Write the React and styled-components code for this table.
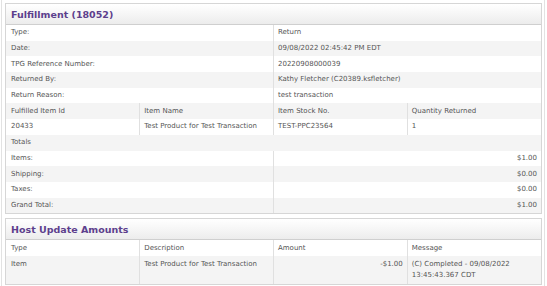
import styled, { createGlobalStyle } from 'styled-components';

const GlobalStyle = createGlobalStyle`
	html, body {
		margin: 0;
		padding: 0;
		background: #ffffff;
	}
	body {
		font-family: 'DejaVu Sans', Verdana, sans-serif;
		color: #555555;
	}
`;

const Wrapper = styled.div`
	box-sizing: border-box;
	width: 544px;
	margin-left: 1px;
	padding: 3px 2px 2px 3px;
	border: 1px solid #e2e2e2;
	border-top: none;
	display: flex;
	flex-direction: column;
	gap: 4px;
`;

const Panel = styled.section`
	border: 1px solid #d6d6d6;
	background: #ffffff;
`;

const PanelHeader = styled.h2`
	margin: 0;
	height: 20px;
	padding: 0 5px;
	display: flex;
	align-items: center;
	font-size: 9.5px;
	font-weight: bold;
	color: #5d3f8d;
	background: linear-gradient(to bottom, #ffffff 0%, #f6f6f6 50%, #ececec 100%);
	border-bottom: 1px solid #cfcfcf;
`;

const Table = styled.table`
	width: 100%;
	border-collapse: collapse;
	table-layout: fixed;
	font-size: 7px;
`;

const Col = styled.col`
	width: 25%;
`;

const Row = styled.tr`
	background: ${(p) => (p.$shaded ? '#f4f4f4' : '#ffffff')};

	& + & td {
		border-top: 1px solid #e0e0e0;
	}
`;

const Cell = styled.td`
	height: ${(p) => (p.$tall ? '24.6px' : '15.7px')};
	padding: ${(p) => (p.$tall ? '3px' : '0')} 4px 0 4px;
	vertical-align: ${(p) => (p.$tall ? 'top' : 'middle')};
	text-align: ${(p) => (p.$right ? 'right' : 'left')};
	line-height: 11px;
	white-space: ${(p) => (p.$wrap ? 'normal' : 'nowrap')};
	overflow: hidden;
	color: #555555;

	& + & {
		border-left: 1px solid #e0e0e0;
	}

	&:first-child {
		padding-left: 5px;
	}
`;

const details = [
	['Type:', 'Return'],
	['Date:', '09/08/2022 02:45:42 PM EDT'],
	['TPG Reference Number:', '20220908000039'],
	['Returned By:', 'Kathy Fletcher (C20389.ksfletcher)'],
	['Return Reason:', 'test transaction'],
];

const totals = [
	['Items:', '$1.00'],
	['Shipping:', '$0.00'],
	['Taxes:', '$0.00'],
	['Grand Total:', '$1.00'],
];

function Columns() {
	return (
		<colgroup>
			<Col />
			<Col />
			<Col />
			<Col />
		</colgroup>
	);
}

export default function App() {
	let i = 0;
	const shaded = () => i++ % 2 === 1;

	return (
		<>
			<GlobalStyle />
			<Wrapper>
				<Panel>
					<PanelHeader>Fulfillment (18052)</PanelHeader>
					<Table>
						<Columns />
						<tbody>
							{details.map(([label, value]) => (
								<Row key={label} $shaded={shaded()}>
									<Cell colSpan={2}>{label}</Cell>
									<Cell colSpan={2}>{value}</Cell>
								</Row>
							))}
							<Row $shaded={shaded()}>
								<Cell>Fulfilled Item Id</Cell>
								<Cell>Item Name</Cell>
								<Cell>Item Stock No.</Cell>
								<Cell>Quantity Returned</Cell>
							</Row>
							<Row $shaded={shaded()}>
								<Cell>20433</Cell>
								<Cell>Test Product for Test Transaction</Cell>
								<Cell>TEST-PPC23564</Cell>
								<Cell>1</Cell>
							</Row>
							<Row $shaded={shaded()}>
								<Cell colSpan={4}>Totals</Cell>
							</Row>
							{totals.map(([label, value]) => (
								<Row key={label} $shaded={shaded()}>
									<Cell colSpan={2}>{label}</Cell>
									<Cell colSpan={2} $right>{value}</Cell>
								</Row>
							))}
						</tbody>
					</Table>
				</Panel>
				<Panel>
					<PanelHeader>Host Update Amounts</PanelHeader>
					<Table>
						<Columns />
						<tbody>
							<Row>
								<Cell>Type</Cell>
								<Cell>Description</Cell>
								<Cell>Amount</Cell>
								<Cell>Message</Cell>
							</Row>
							<Row $shaded>
								<Cell $tall>Item</Cell>
								<Cell $tall>Test Product for Test Transaction</Cell>
								<Cell $tall $right>-$1.00</Cell>
								<Cell $tall $wrap>(C) Completed - 09/08/2022 13:45:43.367 CDT</Cell>
							</Row>
						</tbody>
					</Table>
				</Panel>
			</Wrapper>
		</>
	);
}
